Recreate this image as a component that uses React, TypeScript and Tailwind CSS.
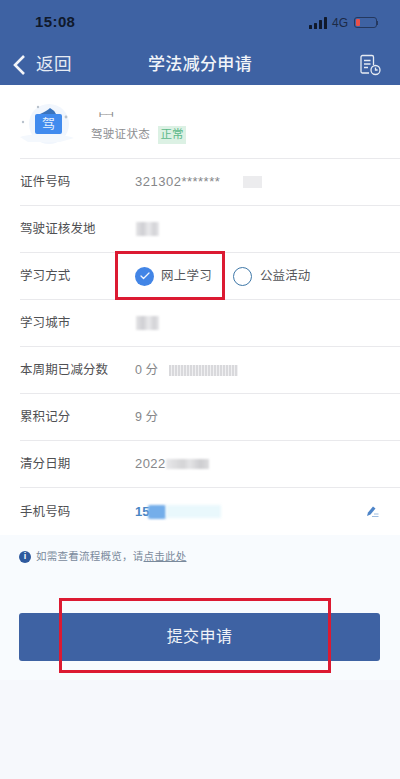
import React from 'react';
import { Check } from 'lucide-react';

const font = { cjk: "font-['Liberation_Sans','Noto_Sans_CJK_SC',sans-serif]" };

const Smudge = () => (
  <div className="ml-[1px] w-[23px] h-[14px] bg-[linear-gradient(90deg,#e4e4e6,#cfcfd3_30%,#eaeaec_55%,#d2d2d6_80%,#e8e8ea)] blur-[1.2px]" />
);

const Row: React.FC<{ label: string; children?: React.ReactNode; last?: boolean }> = ({ label, children, last }) => (
  <div className={`h-[47px] flex items-center ${last ? '' : 'border-b border-[#e9e9ec]'}`}>
    <div className="w-[115px] shrink-0 pt-[1px] text-[12.5px] tracking-[0.1px] text-[#4f5053]">{label}</div>
    <div className="flex-1 flex items-center text-[12.5px] text-[#86878a]">{children}</div>
  </div>
);

const LicenceIcon = () => (
  <div className="relative mt-[2px] w-[54px] h-[46px]">
    <svg width="54" height="46" viewBox="0 0 54 46" className="absolute left-0 top-0">
      <ellipse cx="29" cy="24" rx="20" ry="20" fill="#f1f6fd" />
      <path d="M0 37 C12 33 40 33 54 38 L40 42 L8 42 Z" fill="#f4f8fd" />
      <circle cx="3" cy="22" r="1.2" fill="#b9c2cc" />
      <circle cx="18" cy="7" r="1.2" fill="#b9c2cc" />
      <circle cx="46" cy="17" r="1.4" fill="#b9c2cc" />
      <path d="M20 14 Q27 11 30 8 Q34 10 36 14 Z" fill="#3a74bd" />
    </svg>
    <div className="absolute left-[15px] top-[14px] w-[27px] h-[20px] rounded-[2px] bg-[#418bee] flex items-center justify-center text-[13px] leading-none text-[#e8f1fd]">
      驾
    </div>
  </div>
);

export default function App() {
  return (
    <div className={`relative w-[400px] h-[779px] overflow-hidden bg-[#f6f8fc] ${font.cjk}`}>
      <div className="h-[85px] bg-[#3e62a3] flex flex-col">
        <div className="h-[44px] pl-[35px] pr-[22px] flex items-center justify-between">
          <span className="text-[15px] font-bold tracking-[0.4px] text-[#10192b] mt-[1px]">15:08</span>
          <div className="flex items-center gap-[5px] mt-[1px]">
            <svg width="18" height="12" viewBox="0 0 18 12">
              <rect x="0" y="8" width="3" height="4" rx="0.6" fill="#10192b" />
              <rect x="5" y="6" width="3" height="6" rx="0.6" fill="#10192b" />
              <rect x="10" y="3" width="3" height="9" rx="0.6" fill="#10192b" />
              <rect x="15" y="0" width="3" height="12" rx="0.6" fill="#10192b" />
            </svg>
            <span className="text-[12px] text-[#1c2a45]">4G</span>
            <div className="flex items-center ml-[1px]">
              <div className="w-[23px] h-[11px] rounded-[3px] border border-[#24385f] p-[1px]">
                <div className="w-[4px] h-full rounded-[1px] bg-[#e8504a]" />
              </div>
              <div className="w-[1px] h-[4px] bg-[#24385f]" />
            </div>
          </div>
        </div>
        <div className="flex-1 pl-[12px] pr-[19px] flex items-center justify-between">
          <div className="w-[97px] flex items-center gap-[10px]">
            <svg width="14" height="22" viewBox="0 0 14 22" fill="none">
              <path d="M12 2 L3 11 L12 20" stroke="#f3f5f9" strokeWidth="2.6" />
            </svg>
            <span className="text-[17.5px] tracking-[0.5px] text-[#e6ebf3]">返回</span>
          </div>
          <span className="text-[17px] font-medium tracking-[0.35px] text-[#f1f4f9]">学法减分申请</span>
          <div className="w-[90px] flex justify-end">
            <svg width="22" height="22" viewBox="0 0 22 22" fill="none" stroke="#e6ebf3" strokeWidth="1.3">
              <path d="M10 19 H3.5 A1.5 1.5 0 0 1 2 17.5 V3 A1.5 1.5 0 0 1 3.5 1.5 H13 A1.5 1.5 0 0 1 14.5 3 V11" />
              <path d="M5 6.5 H11.5 M5 10 H11.5 M5 13.5 H9" />
              <circle cx="16.5" cy="16" r="4.5" />
              <path d="M16.5 13.5 V16 H18.6" />
            </svg>
          </div>
        </div>
      </div>

      <div className="bg-white pl-[20px]">
        <div className="h-[74px] flex items-center border-b border-[#e9e9ec]">
          <LicenceIcon />
          <div className="ml-[17px] mt-[7px] flex flex-col">
            <span className="h-[17px] pl-[8px] pt-[3px] text-[9px] leading-none text-[#8a8a8a]">⟝⟞</span>
            <div className="flex items-center gap-[8px] mt-[2px]">
              <span className="text-[11.5px] tracking-[0.3px] text-[#8d8e91]">驾驶证状态</span>
              <span className="w-[28px] h-[18px] bg-[#dcf1e4] flex items-center justify-center text-[11.5px] text-[#5cb98a]">正常</span>
            </div>
          </div>
        </div>
        <Row label="证件号码">
          <span className="text-[13px] tracking-[0.5px]">321302*******</span>
          <div className="ml-[23px] w-[19px] h-[12px] bg-[#ececee] blur-[0.5px]" />
        </Row>
        <Row label="驾驶证核发地">
          <Smudge />
        </Row>
        <Row label="学习方式">
          <div className="flex items-center">
            <div className="w-[19px] h-[19px] rounded-full bg-[#4285e6] flex items-center justify-center">
              <Check size={12} strokeWidth={2.5} color="#f2f6fd" />
            </div>
            <span className="ml-[7px] tracking-[0.25px] text-[#55565a]">网上学习</span>
            <div className="ml-[21px] w-[19px] h-[19px] rounded-full border border-[#3f78a8]" />
            <span className="ml-[8px] tracking-[0.1px] text-[#55565a]">公益活动</span>
          </div>
        </Row>
        <Row label="学习城市">
          <Smudge />
        </Row>
        <Row label="本周期已减分数">
          <span>0 分</span>
          <div className="ml-[11px] w-[69px] h-[11px] bg-[repeating-linear-gradient(90deg,#d9d9dc_0,#d9d9dc_2px,#f0f0f2_2px,#f0f0f2_3px)]" />
        </Row>
        <Row label="累积记分">
          <span>9 分</span>
        </Row>
        <Row label="清分日期">
          <span className="text-[13px] tracking-[0.4px]">2022</span>
          <div className="w-[43px] h-[10px] bg-[linear-gradient(90deg,#e8e8ea,#d4d4d6_40%,#e4e4e6_55%,#cdcdd0_80%,#dcdcde)] blur-[1.2px]" />
        </Row>
        <Row label="手机号码" last>
          <span className="text-[13px] font-bold text-[#4a86c4]">15</span>
          <div className="ml-[-1px] w-[18px] h-[14px] rounded-[2px] bg-[#74aeea] blur-[0.8px]" />
          <div className="w-[55px] h-[13px] bg-[#e9f8fc] blur-[1.5px]" />
          <svg width="13" height="13" viewBox="0 0 13 13" className="ml-auto mr-[21px]">
            <path d="M1 11 L2 7.5 L7 1.5 L9.5 3.5 L4.5 9.5 Z" fill="#4d84c8" />
            <path d="M6 11.5 H12.5 M8 9 H12.5" stroke="#9dbce0" strokeWidth="1" />
          </svg>
        </Row>
      </div>

      <div className="h-[145px] bg-[#f8fbfe] pl-[19px] pr-[20px]">
        <div className="h-[43px] flex items-center">
          <div className="w-[12px] h-[12px] rounded-full bg-[#2f5a9e] flex items-center justify-center text-[9px] font-bold leading-none text-white">i</div>
          <span className="ml-[5px] text-[10.5px] tracking-[0.25px] text-[#7a8a9c]">
            如需查看流程概览，请<span className="underline">点击此处</span>
          </span>
        </div>
        <button className={`mt-[35px] w-full h-[48px] rounded-[3px] bg-[#3e62a3] text-[16px] tracking-[0.4px] text-[#f0f3f8] ${font.cjk}`}>
          提交申请
        </button>
      </div>

      {/* red annotation boxes drawn over the screenshot */}
      <div className="absolute left-[115px] top-[251px] w-[110px] h-[49px] border-[3px] border-[#dc1a32]" />
      <div className="absolute left-[59px] top-[598px] w-[272px] h-[75px] border-[3px] border-[#dc1a32]" />
    </div>
  );
}
